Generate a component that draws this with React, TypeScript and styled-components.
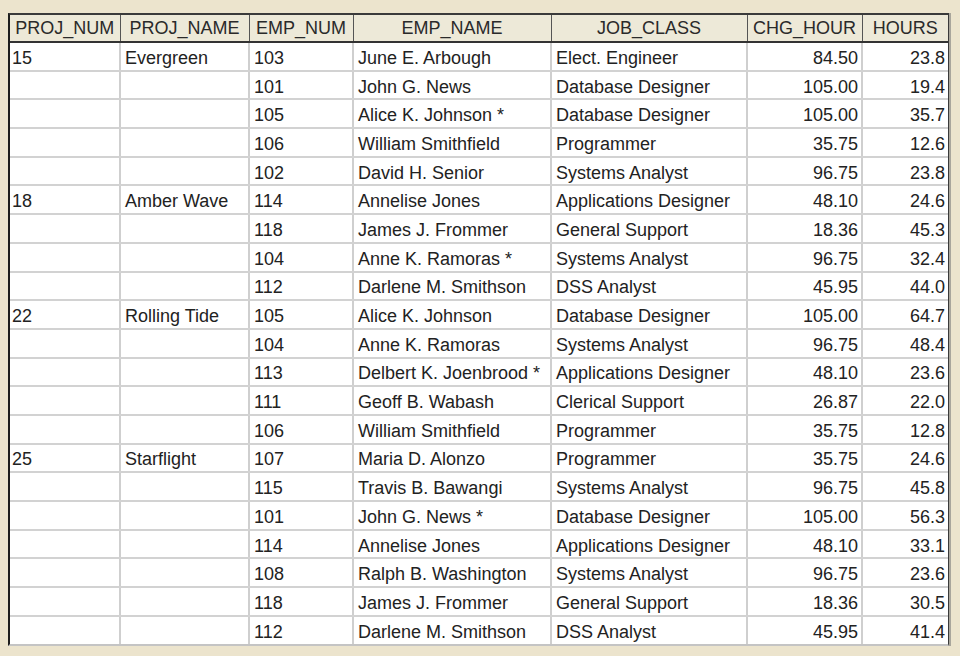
import React from 'react'
import styled, { createGlobalStyle } from 'styled-components'

interface Row {
  projNum?: string
  projName?: string
  empNum: string
  empName: string
  jobClass: string
  chgHour: string
  hours: string
}

const rows: Row[] = [
  { projNum: '15', projName: 'Evergreen', empNum: '103', empName: 'June E. Arbough', jobClass: 'Elect. Engineer', chgHour: '84.50', hours: '23.8' },
  { empNum: '101', empName: 'John G. News', jobClass: 'Database Designer', chgHour: '105.00', hours: '19.4' },
  { empNum: '105', empName: 'Alice K. Johnson *', jobClass: 'Database Designer', chgHour: '105.00', hours: '35.7' },
  { empNum: '106', empName: 'William Smithfield', jobClass: 'Programmer', chgHour: '35.75', hours: '12.6' },
  { empNum: '102', empName: 'David H. Senior', jobClass: 'Systems Analyst', chgHour: '96.75', hours: '23.8' },
  { projNum: '18', projName: 'Amber Wave', empNum: '114', empName: 'Annelise Jones', jobClass: 'Applications Designer', chgHour: '48.10', hours: '24.6' },
  { empNum: '118', empName: 'James J. Frommer', jobClass: 'General Support', chgHour: '18.36', hours: '45.3' },
  { empNum: '104', empName: 'Anne K. Ramoras *', jobClass: 'Systems Analyst', chgHour: '96.75', hours: '32.4' },
  { empNum: '112', empName: 'Darlene M. Smithson', jobClass: 'DSS Analyst', chgHour: '45.95', hours: '44.0' },
  { projNum: '22', projName: 'Rolling Tide', empNum: '105', empName: 'Alice K. Johnson', jobClass: 'Database Designer', chgHour: '105.00', hours: '64.7' },
  { empNum: '104', empName: 'Anne K. Ramoras', jobClass: 'Systems Analyst', chgHour: '96.75', hours: '48.4' },
  { empNum: '113', empName: 'Delbert K. Joenbrood *', jobClass: 'Applications Designer', chgHour: '48.10', hours: '23.6' },
  { empNum: '111', empName: 'Geoff B. Wabash', jobClass: 'Clerical Support', chgHour: '26.87', hours: '22.0' },
  { empNum: '106', empName: 'William Smithfield', jobClass: 'Programmer', chgHour: '35.75', hours: '12.8' },
  { projNum: '25', projName: 'Starflight', empNum: '107', empName: 'Maria D. Alonzo', jobClass: 'Programmer', chgHour: '35.75', hours: '24.6' },
  { empNum: '115', empName: 'Travis B. Bawangi', jobClass: 'Systems Analyst', chgHour: '96.75', hours: '45.8' },
  { empNum: '101', empName: 'John G. News *', jobClass: 'Database Designer', chgHour: '105.00', hours: '56.3' },
  { empNum: '114', empName: 'Annelise Jones', jobClass: 'Applications Designer', chgHour: '48.10', hours: '33.1' },
  { empNum: '108', empName: 'Ralph B. Washington', jobClass: 'Systems Analyst', chgHour: '96.75', hours: '23.6' },
  { empNum: '118', empName: 'James J. Frommer', jobClass: 'General Support', chgHour: '18.36', hours: '30.5' },
  { empNum: '112', empName: 'Darlene M. Smithson', jobClass: 'DSS Analyst', chgHour: '45.95', hours: '41.4' },
]

const columns = [
  { title: 'PROJ_NUM', width: 110 },
  { title: 'PROJ_NAME', width: 129 },
  { title: 'EMP_NUM', width: 104 },
  { title: 'EMP_NAME', width: 198 },
  { title: 'JOB_CLASS', width: 196 },
  { title: 'CHG_HOUR', width: 115 },
  { title: 'HOURS', width: 86 },
]

const GlobalStyle = createGlobalStyle`
  html, body {
    margin: 0;
    padding: 0;
    background: #ece4cd;
  }
  body {
    font-family: "Liberation Sans", Arial, sans-serif;
  }
`

const Page = styled.div`
  width: 960px;
  height: 656px;
  padding: 13px 0 0 8px;
  box-sizing: border-box;
`

const Frame = styled.div`
  width: 938px;
  border-left: 2px solid #1e1e1e;
  border-top: 2px solid #3a3a3a;
  border-right: 1px solid #3a3a3a;
  border-bottom: 2px solid #c4c4c4;
  box-shadow: 2px 0 0 #a9a69c;
  background: #fff;
  overflow: hidden;
`

const Grid = styled.table`
  border-collapse: collapse;
  table-layout: fixed;
  width: 938px;
  font-size: 18px;
  color: #222;
`

const HeadRow = styled.tr`
  height: 27px;
`

const HeadCell = styled.th`
  padding: 0;
  font-weight: normal;
  line-height: 20px;
  background: #ede9d8;
  color: #2a2a2a;
  text-align: center;
  border-right: 1px solid #555;
  border-bottom: 2px solid #333;
  white-space: nowrap;
  &:last-child {
    border-right: none;
  }
`

const BodyRow = styled.tr`
  height: 28.7px;
  &:last-child td {
    border-bottom: none;
  }
`

const Cell = styled.td<{ $right?: boolean }>`
  padding: 3px ${(p) => (p.$right ? '3px' : '0')} 0 ${(p) => (p.$right ? '0' : '4px')};
  line-height: 20px;
  text-align: ${(p) => (p.$right ? 'right' : 'left')};
  border-right: 2px solid #cfcfcf;
  border-bottom: 2px solid #d2d2d2;
  white-space: nowrap;
  overflow: hidden;
  &:first-child {
    padding-left: 2px;
  }
  &:last-child {
    border-right: none;
  }
`

export default function App() {
  return (
    <>
      <GlobalStyle />
      <Page>
        <Frame>
          <Grid>
            <colgroup>
              {columns.map((c) => (
                <col key={c.title} style={{ width: c.width }} />
              ))}
            </colgroup>
            <thead>
              <HeadRow>
                {columns.map((c) => (
                  <HeadCell key={c.title}>{c.title}</HeadCell>
                ))}
              </HeadRow>
            </thead>
            <tbody>
              {rows.map((r, i) => (
                <BodyRow key={i}>
                  <Cell>{r.projNum}</Cell>
                  <Cell>{r.projName}</Cell>
                  <Cell>{r.empNum}</Cell>
                  <Cell>{r.empName}</Cell>
                  <Cell>{r.jobClass}</Cell>
                  <Cell $right>{r.chgHour}</Cell>
                  <Cell $right>{r.hours}</Cell>
                </BodyRow>
              ))}
            </tbody>
          </Grid>
        </Frame>
      </Page>
    </>
  )
}
